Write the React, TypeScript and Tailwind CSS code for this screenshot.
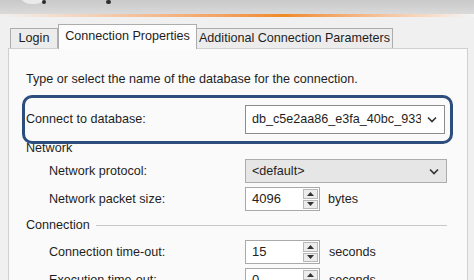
import React from "react";

const font = { fontFamily: '"Liberation Sans", Arial, sans-serif' };

function Chevron() {
  return (
    <svg width="10" height="7" viewBox="0 0 10 7" className="shrink-0">
      <path d="M1 1.5 L5 5.5 L9 1.5" fill="none" stroke="#333" strokeWidth="1.6" />
    </svg>
  );
}

function Spin({ value }: { value: string }) {
  return (
    <div className="flex h-[24px] w-[75px] border border-[#a9a9a9] bg-white">
      <div className="flex flex-1 items-center pl-[6px] text-[13px] text-[#222]">{value}</div>
      <div className="flex w-[17px] flex-col gap-[1px] bg-white p-[1px]">
        <div className="flex flex-1 items-center justify-center border border-[#b8b8b8] bg-[#ececec]">
          <svg width="7" height="4" viewBox="0 0 7 4"><path d="M0 4 L3.5 0 L7 4 Z" fill="#333" /></svg>
        </div>
        <div className="flex flex-1 items-center justify-center border border-[#b8b8b8] bg-[#ececec]">
          <svg width="7" height="4" viewBox="0 0 7 4"><path d="M0 0 L3.5 4 L7 0 Z" fill="#333" /></svg>
        </div>
      </div>
    </div>
  );
}

export default function App() {
  return (
    <div className="relative h-[280px] w-[474px] overflow-hidden bg-[#f0f0f0] text-[12.6px] text-[#1e1e1e]" style={font}>
      {/* top band */}
      <div className="relative h-[14px] bg-gradient-to-b from-[#c9c9c9] to-[#dadada]">
        <div className="absolute left-[20px] top-[-6px] h-[10px] w-[26px] rounded-b-full bg-[#eaeaea]" />
        <div className="absolute left-[42px] top-[0px] h-[4px] w-[4px] rounded-full bg-[#2a2a2a]" />
        <div className="absolute left-[106px] top-[0px] h-[4px] w-[5px] rounded-full bg-[#303030]" />
      </div>
      <div className="h-[3px] bg-gradient-to-r from-[#f0f0f0] via-[#f08a24] via-60% to-[#f4f4f4]" />
      {/* tabs */}
      <div className="flex items-end whitespace-nowrap pl-[10px] pt-[7px]">
        <div className="flex h-[20px] w-[48px] items-center justify-center border border-b-0 border-[#adadad] bg-[#ececec]">Login</div>
        <div className="z-10 -mb-px flex h-[25px] w-[139px] items-center justify-center border border-b-0 border-[#adadad] bg-[#fcfcfc] pb-[2px]">Connection Properties</div>
        <div className="flex h-[20px] w-[196px] items-center justify-center border border-b-0 border-l-0 border-[#adadad] bg-[#ececec]">Additional Connection Parameters</div>
      </div>
      {/* panel */}
      <div className="ml-[8px] mr-[6px] h-[240px] border border-[#d0d0d0] bg-[#fafafa] pl-[17px] pr-[20px] pt-[21px]">
        <div className="flex h-[18px] items-center">Type or select the name of the database for the connection.</div>
        <div className="mt-[17px] flex h-[29px] items-center">
          <div className="w-[219px]">Connect to database:</div>
          <div className="flex h-[29px] w-[200px] items-center border border-[#8c8c8c] bg-white pl-[6px] pr-[7px]">
            <span className="min-w-0 flex-1 overflow-hidden whitespace-nowrap">db_c5e2aa86_e3fa_40bc_9333</span>
            <span className="ml-[6px] flex"><Chevron /></span>
          </div>
        </div>
        <div className="mt-[4px] flex h-[20px] items-center">Network</div>
        <div className="mt-[1px] flex h-[24px] items-center">
          <div className="w-[219px] pl-[23px]">Network protocol:</div>
          <div className="flex h-[24px] w-[202px] items-center justify-between border border-[#acacac] bg-[#e6e6e6] pl-[6px] pr-[7px]">
            <span>&lt;default&gt;</span>
            <Chevron />
          </div>
        </div>
        <div className="mt-[4px] flex h-[24px] items-center">
          <div className="w-[219px] pl-[23px]">Network packet size:</div>
          <Spin value="4096" />
          <span className="ml-[8px]">bytes</span>
        </div>
        <div className="mt-[2px] flex h-[24px] items-center">
          <span>Connection</span>
          <div className="ml-[6px] h-px flex-1 bg-[#c8c8c8]" />
        </div>
        <div className="mt-[3px] flex h-[24px] items-center">
          <div className="w-[219px] pl-[23px]">Connection time-out:</div>
          <Spin value="15" />
          <span className="ml-[9px]">seconds</span>
        </div>
        <div className="mt-[4px] flex h-[24px] items-center">
          <div className="w-[219px] pl-[23px]">Execution time-out:</div>
          <Spin value="0" />
          <span className="ml-[9px]">seconds</span>
        </div>
      </div>
      {/* annotation highlight */}
      <div className="pointer-events-none absolute left-[22px] top-[95px] h-[49px] w-[431px] rounded-[10px] border-[3px] border-[#2d4d7c]" />
    </div>
  );
}
